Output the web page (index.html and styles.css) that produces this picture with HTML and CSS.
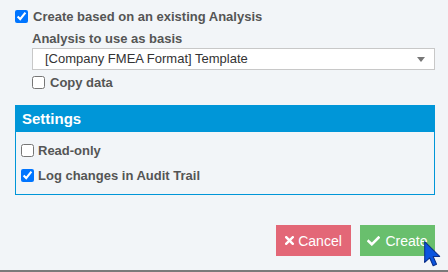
FILE: index.html
```html
<!DOCTYPE html>
<html>
<head>
<meta charset="utf-8">
<link rel="stylesheet" href="styles.css">
</head>
<body>
<div class="dialog">
  <div class="content">
    <label class="opt">
      <input type="checkbox" checked>
      <span>Create based on an existing Analysis</span>
    </label>
    <div class="sub">
      <div class="field-label">Analysis to use as basis</div>
      <div class="select">
        <span class="select-text">[Company FMEA Format] Template</span>
        <span class="caret"></span>
      </div>
      <label class="opt">
        <input type="checkbox">
        <span>Copy data</span>
      </label>
    </div>
    <div class="panel">
      <div class="panel-head">Settings</div>
      <div class="panel-body">
        <label class="opt">
          <input type="checkbox">
          <span>Read-only</span>
        </label>
        <label class="opt">
          <input type="checkbox" checked>
          <span>Log changes in Audit Trail</span>
        </label>
      </div>
    </div>
  </div>
  <div class="footer">
    <button class="btn btn-cancel">
      <svg class="ico" width="9" height="9" viewBox="0 0 9 9"><path d="M1.2 1.2 L7.8 7.8 M7.8 1.2 L1.2 7.8" stroke="#fff" stroke-width="2.4" stroke-linecap="square"/></svg>
      <span>Cancel</span>
    </button>
    <button class="btn btn-create">
      <svg class="ico" width="13" height="10" viewBox="0 0 13 10"><path d="M1.5 5.2 L4.8 8.3 L11.5 1.6" stroke="#fff" stroke-width="2.6" fill="none" stroke-linecap="square"/></svg>
      <span>Create</span>
    </button>
  </div>
  <svg class="cursor" width="17" height="26" viewBox="0 0 13 20"><path d="M0.5 0.5 L0.5 16.5 L4.3 12.9 L7 19 L9.6 17.9 L7 11.9 L12 11.9 Z" fill="#0a55e0" stroke="#0a2f8a" stroke-width="0.8" stroke-linejoin="round"/></svg>
</div>
</body>
</html>
```
FILE: styles.css
```css
html, body {
  margin: 0;
  padding: 0;
  background: #f2f5f8;
}
body {
  font-family: "Liberation Sans", Arial, sans-serif;
  font-size: 13px;
  color: #555;
}
.dialog {
  position: relative;
  width: 448px;
  height: 272px;
  box-sizing: border-box;
}
.content {
  padding: 8px 13px 0 15px;
}
.opt {
  display: flex;
  align-items: center;
  gap: 5px;
  height: 17px;
  line-height: 17px;
  font-weight: bold;
}
.opt input {
  margin: 0;
  width: 13px;
  height: 13px;
}
.sub {
  padding-left: 17px;
}
.field-label {
  margin-top: 5px;
  height: 17px;
  line-height: 17px;
  font-weight: bold;
}
.select {
  margin-top: 1px;
  height: 22px;
  box-sizing: border-box;
  border: 1px solid #c8c8c8;
  background: #fff;
  display: flex;
  align-items: center;
  justify-content: space-between;
  padding: 0 9px 0 12px;
  color: #333;
}
.select-text {
  line-height: 20px;
}
.caret {
  width: 0;
  height: 0;
  border-left: 4px solid transparent;
  border-right: 4px solid transparent;
  border-top: 5px solid #777;
  margin-top: 1px;
}
.sub .opt {
  margin-top: 4px;
}
.panel {
  margin-top: 14px;
  border: 1px solid #0096d8;
}
.panel-head {
  background: #0096d8;
  color: #fff;
  font-weight: bold;
  font-size: 15px;
  height: 26px;
  line-height: 26px;
  padding-left: 6px;
}
.panel-body {
  padding: 10px 5px 10px 5px;
  display: flex;
  flex-direction: column;
  gap: 8px;
}
.panel-body .opt {
  gap: 4px;
}
.footer {
  display: flex;
  justify-content: flex-end;
  gap: 9px;
  padding: 30px 13px 14px 0;
  border-bottom: 2px solid #7a7a7a;
}
.btn {
  width: 75px;
  height: 31px;
  border: none;
  margin: 0;
  padding: 0;
  color: #fff;
  font-family: "Liberation Sans", Arial, sans-serif;
  font-size: 14px;
  display: flex;
  align-items: center;
  justify-content: center;
  gap: 4px;
}
.btn-create {
  gap: 5px;
}
.btn-cancel {
  background: #e36777;
}
.btn-create {
  background: #69bf6d;
}
.cursor {
  position: absolute;
  left: 424px;
  top: 241px;
}
```
